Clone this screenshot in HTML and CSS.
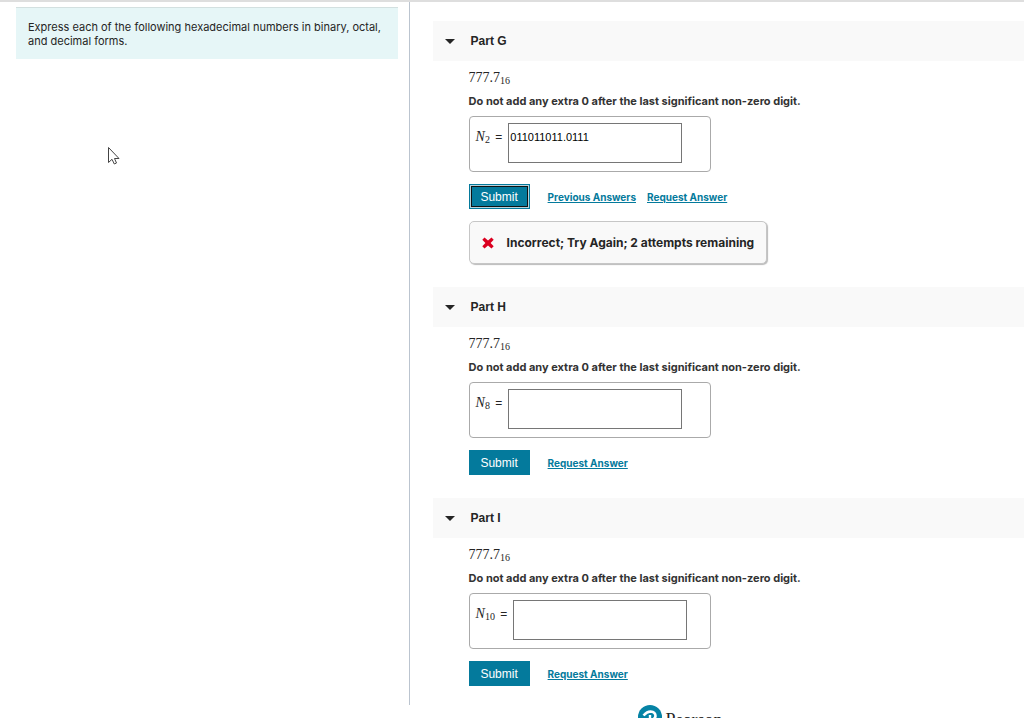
FILE: index.html
```html
<!DOCTYPE html>
<html lang="en">
<head>
  <meta charset="UTF-8" />
  <meta name="viewport" content="width=device-width, initial-scale=1.0" />
  <title>Hexadecimal Conversion</title>
  <link rel="stylesheet" href="styles.css">
</head>
<body>
  <main class="split">
    <aside class="intro">
      <p class="intro-text">Express each of the following hexadecimal numbers in binary, octal, and decimal forms.</p>
    </aside>

    <div class="parts">
      <section class="part">
        <h2 class="part-header"><span class="caret"></span>Part G</h2>
        <div class="part-body">
          <p class="number">777.7<sub>16</sub></p>
          <p class="hint">Do not add any extra 0 after the last significant non-zero digit.</p>
          <div class="answer">
            <label for="answerG"><span class="math"><i>N</i><sub>2</sub></span> =</label>
            <input type="text" id="answerG" value="011011011.0111" />
          </div>
          <div class="actions">
            <button type="button" class="submit focused">Submit</button>
            <a href="#">Previous Answers</a>
            <a href="#">Request Answer</a>
          </div>
          <div class="feedback">
            <svg class="cross" viewBox="0 0 12 12" width="12" height="12" aria-hidden="true">
              <path d="M2.5 0.5 L6 3.5 L9.5 0.5 L11.7 2.7 L8.6 6 L11.7 9.3 L9.5 11.5 L6 8.5 L2.5 11.5 L0.3 9.3 L3.4 6 L0.3 2.7 Z" />
            </svg>
            Incorrect; Try Again; 2 attempts remaining
          </div>
        </div>
      </section>

      <section class="part">
        <h2 class="part-header"><span class="caret"></span>Part H</h2>
        <div class="part-body">
          <p class="number">777.7<sub>16</sub></p>
          <p class="hint">Do not add any extra 0 after the last significant non-zero digit.</p>
          <div class="answer">
            <label for="answerH"><span class="math"><i>N</i><sub>8</sub></span> =</label>
            <input type="text" id="answerH" />
          </div>
          <div class="actions">
            <button type="button" class="submit">Submit</button>
            <a href="#">Request Answer</a>
          </div>
        </div>
      </section>

      <section class="part">
        <h2 class="part-header"><span class="caret"></span>Part I</h2>
        <div class="part-body">
          <p class="number">777.7<sub>16</sub></p>
          <p class="hint">Do not add any extra 0 after the last significant non-zero digit.</p>
          <div class="answer">
            <label for="answerI"><span class="math"><i>N</i><sub>10</sub></span> =</label>
            <input type="text" id="answerI" />
          </div>
          <div class="actions">
            <button type="button" class="submit">Submit</button>
            <a href="#">Request Answer</a>
          </div>
        </div>
      </section>
    </div>
  </main>

  <footer class="footer">
    <svg viewBox="0 0 24 24" width="24" height="24" aria-hidden="true">
      <circle cx="12" cy="12" r="12" fill="#0583a5" />
      <path d="M5.5 10.5 Q9 6.5 12.5 6.5 Q17.500 7 17.500 11 Q17 14.500 13 15" fill="none" stroke="#fff" stroke-width="2.600" />
      <path d="M12 10 V16" stroke="#fff" stroke-width="2.400" />
      <circle cx="12" cy="19" r="1.500" fill="#fff" />
    </svg>
    <span class="brand">Pearson</span>
  </footer>

  <svg class="cursor" viewBox="0 0 12 18" width="12" height="18" aria-hidden="true">
    <path d="M0.5 0.5 V15.500 L4 12.300 L6.300 17 L8.500 16 L6.500 11.500 H11 Z" />
  </svg>
</body>
</html>
```

FILE: styles.css
```css
:root {
  --teal: #047a9c;
  --text: #252525;
  --panel: #f9f9f9;
}

* {
  box-sizing: border-box;
}

body {
  font-family: "Liberation Sans", Arial, sans-serif;
  font-size: 12px;
  margin: 0;
  height: 100vh;
  overflow: hidden;
  color: var(--text);
  background-color: #fff;
  border-top: 2px solid #dedede;
}

p,
h2 {
  margin: 0;
}

.split {
  display: flex;
}

.intro {
  width: 40%;
  padding: 5px 11px 0 16px;
  border-right: 1px solid #bbc4cf;
}

.intro-text {
  padding: 12px 12px 11px;
  border-top: 1px solid #d3e0e0;
  background-color: #e6f6f7;
  font-family: Inter, Arial, sans-serif;
  font-size: 11px;
  line-height: 14px;
}

.parts {
  flex: 1;
  padding: 19px 0 19px 23px;
}

.part + .part {
  margin-top: 23px;
}

.part-header {
  display: flex;
  align-items: center;
  gap: 16px;
  height: 40px;
  padding-left: 12px;
  background-color: var(--panel);
  font-size: 12px;
}

.caret {
  border: 5px solid transparent;
  border-top-color: var(--text);
  border-bottom-width: 0;
}

.part-body {
  padding-left: 36px;
}

.number,
.math {
  font-family: "Liberation Serif", "Times New Roman", serif;
  font-size: 14px;
}

.number {
  padding-top: 8px;
  line-height: 18px;
}

.math {
  margin-right: 2px;
}

sub {
  font-size: 10px;
  line-height: 0;
  vertical-align: -2px;
}

.hint {
  padding: 6px 0 7px;
  line-height: 16px;
  font-family: Inter, Arial, sans-serif;
  font-size: 11px;
  font-weight: bold;
  color: #333;
}

.answer {
  display: flex;
  align-items: flex-start;
  gap: 6px;
  width: 242px;
  height: 56px;
  padding: 6px;
  border: 1px solid #aaa;
  border-radius: 4px;
}

.answer label {
  line-height: 28px;
}

.answer input {
  width: 174px;
  height: 40px;
  padding: 0 0 12px 1px;
  border: 1px solid #767676;
  font-family: inherit;
  font-size: 11px;
  color: #000;
}

.actions {
  display: flex;
  align-items: center;
  gap: 11px;
  margin-top: 12px;
}

.actions a {
  font-family: Inter, Arial, sans-serif;
  font-size: 10px;
  font-weight: bold;
  color: var(--teal);
}

.submit {
  width: 61px;
  height: 25px;
  margin-right: 7px;
  padding: 0;
  border: 0;
  background-color: var(--teal);
  font-family: inherit;
  font-size: 12px;
  color: #fff;
}

.focused {
  border: 1px solid var(--teal);
  box-shadow: inset 0 0 0 1px #b5d3dc, inset 0 0 0 2px #111;
}

.feedback {
  display: inline-flex;
  align-items: center;
  gap: 13px;
  height: 43px;
  margin-top: 12px;
  padding: 0 12px;
  border: 1px solid #c6c6c6;
  border-radius: 5px;
  background-color: var(--panel);
  box-shadow: 1px 1px 1px #bbb;
  font-family: Inter, Arial, sans-serif;
  font-weight: bold;
}

.cross {
  fill: #db0020;
}

.footer {
  display: flex;
  justify-content: center;
  gap: 4px;
  padding-left: 336px;
}

.brand {
  font-family: "Liberation Serif", "Times New Roman", serif;
  font-size: 18px;
  line-height: 30px;
}

/* mouse pointer over the page */
.cursor {
  position: absolute;
  top: 147px;
  left: 108px;
  fill: #fff;
  stroke: #444;
}
```
